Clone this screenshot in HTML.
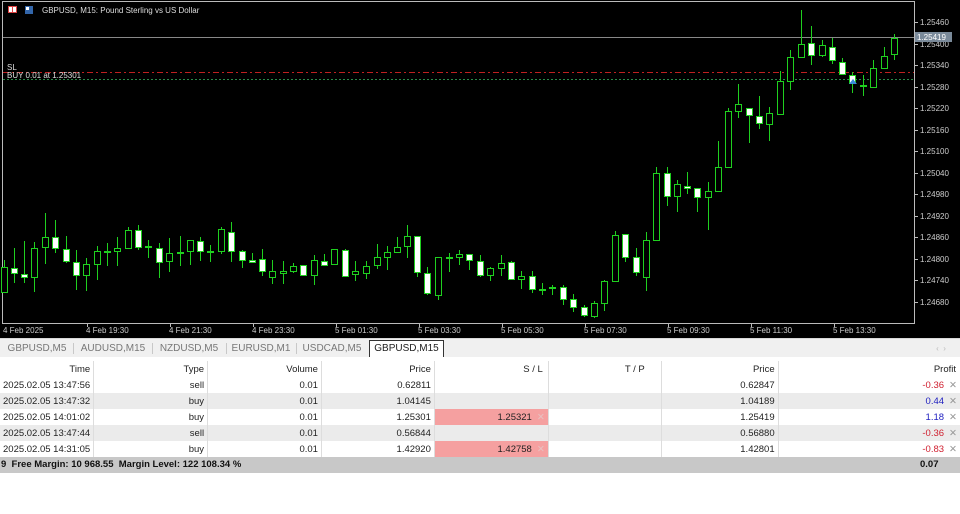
<!DOCTYPE html>
<html><head><meta charset="utf-8"><style>
*{margin:0;padding:0;box-sizing:border-box}
body{width:960px;height:514px;background:#fff;font-family:"Liberation Sans",sans-serif;overflow:hidden;position:relative}
#chart{position:absolute;left:0;top:0;width:960px;height:338px;background:#000}
svg text{font-family:"Liberation Sans",sans-serif}
.u{fill:#000;stroke:#1fd01f;stroke-width:1}
.d{fill:#fff;stroke:#1fd01f;stroke-width:1}
line.w{stroke:#1fd01f;stroke-width:1}
#tabs{position:absolute;left:0;top:338px;width:960px;height:19px;background:#f0f0f0;border-top:1px solid #d8d8d8;font-size:10px;color:#777}
.tab{position:absolute;top:3px;height:14px;line-height:14px;text-align:center}
.sep{position:absolute;top:4px;width:1px;height:11px;background:#c8c8c8}
.act{position:absolute;left:369px;top:1px;width:75px;height:17px;background:#fff;border:1px solid #333;border-bottom:none;color:#222;font-size:10px;line-height:15px;text-align:center}
table{position:absolute;left:0;top:361px;border-collapse:collapse;font-size:9.5px;color:#222}
td{height:16px;padding:0 3px;text-align:right;border-right:1px solid #ddd;white-space:nowrap}
tr.g td{background:#ebebeb}
.x{color:#999;padding-left:5px}
.red{color:#d02030}.blue{color:#2020c0}
.sl{background:#f5a0a0 !important}
#foot{position:absolute;left:0;top:457px;width:960px;height:16px;background:#c8c8c8;font-size:9.5px;font-weight:bold;color:#111;line-height:16px}
</style></head><body>
<div id="chart">
<svg width="960" height="338" xmlns="http://www.w3.org/2000/svg">
<rect x="2.5" y="1.5" width="912" height="322" fill="none" stroke="#bbb"/>
<line x1="3" y1="37.5" x2="914" y2="37.5" stroke="#888"/>
<line x1="3" y1="72.5" x2="914" y2="72.5" stroke="#c02020" stroke-dasharray="6,3,2,3"/>
<line x1="3" y1="79.5" x2="914" y2="79.5" stroke="#2a8a4a" stroke-dasharray="2,2"/>
<text x="7" y="70" fill="#ddd" font-size="8">SL</text>
<text x="7" y="78" fill="#ddd" font-size="8">BUY 0.01 at 1.25301</text>
<rect x="8" y="6" width="9" height="7" fill="#d44"/><rect x="9" y="7" width="3" height="5" fill="#fff"/><rect x="13" y="7" width="3" height="5" fill="#fff"/>
<rect x="25" y="6" width="8" height="8" fill="#36a"/><rect x="26" y="7" width="3" height="3" fill="#fff"/>
<text x="42" y="13" fill="#ddd" font-size="8">GBPUSD, M15:  Pound Sterling vs US Dollar</text>
<g>
<line class="w" x1="4.5" y1="260" x2="4.5" y2="292"/><rect class="u" x="1.5" y="267.5" width="6" height="25"/>
<line class="w" x1="14.5" y1="248" x2="14.5" y2="283"/><rect class="d" x="11.5" y="268.5" width="6" height="5"/>
<line class="w" x1="24.5" y1="241" x2="24.5" y2="283"/><rect class="d" x="21.5" y="274.5" width="6" height="3"/>
<line class="w" x1="34.5" y1="242" x2="34.5" y2="292"/><rect class="u" x="31.5" y="248.5" width="6" height="29"/>
<line class="w" x1="45.5" y1="213" x2="45.5" y2="264"/><rect class="u" x="42.5" y="237.5" width="6" height="10"/>
<line class="w" x1="55.5" y1="220" x2="55.5" y2="253"/><rect class="d" x="52.5" y="237.5" width="6" height="11"/>
<line class="w" x1="66.5" y1="236" x2="66.5" y2="263"/><rect class="d" x="63.5" y="249.5" width="6" height="12"/>
<line class="w" x1="76.5" y1="250" x2="76.5" y2="290"/><rect class="d" x="73.5" y="262.5" width="6" height="13"/>
<line class="w" x1="86.5" y1="258" x2="86.5" y2="291"/><rect class="u" x="83.5" y="264.5" width="6" height="11"/>
<line class="w" x1="97.5" y1="246" x2="97.5" y2="280"/><rect class="u" x="94.5" y="251.5" width="6" height="13"/>
<line class="w" x1="107.5" y1="243" x2="107.5" y2="266"/><rect class="u" x="104.5" y="251.5" width="6" height="1"/>
<line class="w" x1="117.5" y1="237" x2="117.5" y2="266"/><rect class="u" x="114.5" y="248.5" width="6" height="3"/>
<line class="w" x1="128.5" y1="227" x2="128.5" y2="249"/><rect class="u" x="125.5" y="230.5" width="6" height="18"/>
<line class="w" x1="138.5" y1="225" x2="138.5" y2="250"/><rect class="d" x="135.5" y="230.5" width="6" height="17"/>
<line class="w" x1="148.5" y1="240" x2="148.5" y2="258"/><rect class="d" x="145.5" y="246.5" width="6" height="1"/>
<line class="w" x1="159.5" y1="243" x2="159.5" y2="278"/><rect class="d" x="156.5" y="248.5" width="6" height="14"/>
<line class="w" x1="169.5" y1="238" x2="169.5" y2="272"/><rect class="u" x="166.5" y="253.5" width="6" height="8"/>
<line class="w" x1="180.5" y1="236" x2="180.5" y2="266"/><rect class="u" x="177.5" y="252.5" width="6" height="1"/>
<line class="w" x1="190.5" y1="240" x2="190.5" y2="265"/><rect class="u" x="187.5" y="240.5" width="6" height="11"/>
<line class="w" x1="200.5" y1="237" x2="200.5" y2="261"/><rect class="d" x="197.5" y="241.5" width="6" height="10"/>
<line class="w" x1="210.5" y1="245" x2="210.5" y2="262"/><rect class="d" x="207.5" y="251.5" width="6" height="1"/>
<line class="w" x1="221.5" y1="227" x2="221.5" y2="254"/><rect class="u" x="218.5" y="229.5" width="6" height="22"/>
<line class="w" x1="231.5" y1="222" x2="231.5" y2="262"/><rect class="d" x="228.5" y="232.5" width="6" height="19"/>
<line class="w" x1="242.5" y1="250" x2="242.5" y2="268"/><rect class="d" x="239.5" y="251.5" width="6" height="9"/>
<line class="w" x1="252.5" y1="253" x2="252.5" y2="262"/><rect class="d" x="249.5" y="260.5" width="6" height="2"/>
<line class="w" x1="262.5" y1="249" x2="262.5" y2="276"/><rect class="d" x="259.5" y="259.5" width="6" height="12"/>
<line class="w" x1="272.5" y1="260" x2="272.5" y2="284"/><rect class="u" x="269.5" y="271.5" width="6" height="6"/>
<line class="w" x1="283.5" y1="261" x2="283.5" y2="284"/><rect class="u" x="280.5" y="271.5" width="6" height="2"/>
<line class="w" x1="293.5" y1="263" x2="293.5" y2="273"/><rect class="u" x="290.5" y="266.5" width="6" height="5"/>
<line class="w" x1="303.5" y1="265" x2="303.5" y2="275"/><rect class="d" x="300.5" y="265.5" width="6" height="10"/>
<line class="w" x1="314.5" y1="255" x2="314.5" y2="285"/><rect class="u" x="311.5" y="260.5" width="6" height="15"/>
<line class="w" x1="324.5" y1="254" x2="324.5" y2="265"/><rect class="d" x="321.5" y="261.5" width="6" height="4"/>
<line class="w" x1="334.5" y1="249" x2="334.5" y2="264"/><rect class="u" x="331.5" y="249.5" width="6" height="15"/>
<line class="w" x1="345.5" y1="249" x2="345.5" y2="277"/><rect class="d" x="342.5" y="250.5" width="6" height="26"/>
<line class="w" x1="355.5" y1="261" x2="355.5" y2="281"/><rect class="u" x="352.5" y="271.5" width="6" height="3"/>
<line class="w" x1="366.5" y1="261" x2="366.5" y2="279"/><rect class="u" x="363.5" y="266.5" width="6" height="7"/>
<line class="w" x1="377.5" y1="244" x2="377.5" y2="269"/><rect class="u" x="374.5" y="257.5" width="6" height="8"/>
<line class="w" x1="387.5" y1="246" x2="387.5" y2="270"/><rect class="u" x="384.5" y="252.5" width="6" height="5"/>
<line class="w" x1="397.5" y1="237" x2="397.5" y2="253"/><rect class="u" x="394.5" y="247.5" width="6" height="5"/>
<line class="w" x1="407.5" y1="225" x2="407.5" y2="258"/><rect class="u" x="404.5" y="236.5" width="6" height="10"/>
<line class="w" x1="417.5" y1="236" x2="417.5" y2="277"/><rect class="d" x="414.5" y="236.5" width="6" height="36"/>
<line class="w" x1="427.5" y1="267" x2="427.5" y2="295"/><rect class="d" x="424.5" y="273.5" width="6" height="20"/>
<line class="w" x1="438.5" y1="257" x2="438.5" y2="300"/><rect class="u" x="435.5" y="257.5" width="6" height="38"/>
<line class="w" x1="449.5" y1="253" x2="449.5" y2="272"/><rect class="u" x="446.5" y="257.5" width="6" height="1"/>
<line class="w" x1="459.5" y1="250" x2="459.5" y2="265"/><rect class="u" x="456.5" y="254.5" width="6" height="3"/>
<line class="w" x1="469.5" y1="254" x2="469.5" y2="270"/><rect class="d" x="466.5" y="254.5" width="6" height="6"/>
<line class="w" x1="480.5" y1="255" x2="480.5" y2="277"/><rect class="d" x="477.5" y="261.5" width="6" height="14"/>
<line class="w" x1="490.5" y1="267" x2="490.5" y2="281"/><rect class="u" x="487.5" y="268.5" width="6" height="7"/>
<line class="w" x1="501.5" y1="255" x2="501.5" y2="276"/><rect class="u" x="498.5" y="263.5" width="6" height="5"/>
<line class="w" x1="511.5" y1="261" x2="511.5" y2="280"/><rect class="d" x="508.5" y="262.5" width="6" height="17"/>
<line class="w" x1="521.5" y1="271" x2="521.5" y2="289"/><rect class="u" x="518.5" y="276.5" width="6" height="3"/>
<line class="w" x1="532.5" y1="271" x2="532.5" y2="293"/><rect class="d" x="529.5" y="276.5" width="6" height="13"/>
<line class="w" x1="542.5" y1="283" x2="542.5" y2="295"/><rect class="d" x="539.5" y="289.5" width="6" height="1"/>
<line class="w" x1="552.5" y1="285" x2="552.5" y2="295"/><rect class="u" x="549.5" y="287.5" width="6" height="1"/>
<line class="w" x1="563.5" y1="285" x2="563.5" y2="305"/><rect class="d" x="560.5" y="287.5" width="6" height="12"/>
<line class="w" x1="573.5" y1="294" x2="573.5" y2="312"/><rect class="d" x="570.5" y="299.5" width="6" height="8"/>
<line class="w" x1="584.5" y1="305" x2="584.5" y2="317"/><rect class="d" x="581.5" y="307.5" width="6" height="8"/>
<line class="w" x1="594.5" y1="301" x2="594.5" y2="318"/><rect class="u" x="591.5" y="303.5" width="6" height="13"/>
<line class="w" x1="604.5" y1="280" x2="604.5" y2="311"/><rect class="u" x="601.5" y="281.5" width="6" height="22"/>
<line class="w" x1="615.5" y1="231" x2="615.5" y2="282"/><rect class="u" x="612.5" y="235.5" width="6" height="46"/>
<line class="w" x1="625.5" y1="234" x2="625.5" y2="262"/><rect class="d" x="622.5" y="234.5" width="6" height="23"/>
<line class="w" x1="636.5" y1="248" x2="636.5" y2="276"/><rect class="d" x="633.5" y="257.5" width="6" height="15"/>
<line class="w" x1="646.5" y1="232" x2="646.5" y2="291"/><rect class="u" x="643.5" y="240.5" width="6" height="37"/>
<line class="w" x1="656.5" y1="167" x2="656.5" y2="241"/><rect class="u" x="653.5" y="173.5" width="6" height="67"/>
<line class="w" x1="667.5" y1="167" x2="667.5" y2="206"/><rect class="d" x="664.5" y="173.5" width="6" height="23"/>
<line class="w" x1="677.5" y1="180" x2="677.5" y2="212"/><rect class="u" x="674.5" y="184.5" width="6" height="12"/>
<line class="w" x1="687.5" y1="172" x2="687.5" y2="194"/><rect class="d" x="684.5" y="186.5" width="6" height="2"/>
<line class="w" x1="697.5" y1="188" x2="697.5" y2="212"/><rect class="d" x="694.5" y="188.5" width="6" height="9"/>
<line class="w" x1="708.5" y1="182" x2="708.5" y2="230"/><rect class="u" x="705.5" y="191.5" width="6" height="6"/>
<line class="w" x1="718.5" y1="141" x2="718.5" y2="191"/><rect class="u" x="715.5" y="167.5" width="6" height="24"/>
<line class="w" x1="728.5" y1="108" x2="728.5" y2="168"/><rect class="u" x="725.5" y="111.5" width="6" height="56"/>
<line class="w" x1="738.5" y1="84" x2="738.5" y2="118"/><rect class="u" x="735.5" y="104.5" width="6" height="7"/>
<line class="w" x1="749.5" y1="108" x2="749.5" y2="143"/><rect class="d" x="746.5" y="108.5" width="6" height="7"/>
<line class="w" x1="759.5" y1="96" x2="759.5" y2="129"/><rect class="d" x="756.5" y="116.5" width="6" height="7"/>
<line class="w" x1="769.5" y1="107" x2="769.5" y2="141"/><rect class="u" x="766.5" y="113.5" width="6" height="11"/>
<line class="w" x1="780.5" y1="71" x2="780.5" y2="114"/><rect class="u" x="777.5" y="81.5" width="6" height="33"/>
<line class="w" x1="790.5" y1="50" x2="790.5" y2="90"/><rect class="u" x="787.5" y="57.5" width="6" height="24"/>
<line class="w" x1="801.5" y1="10" x2="801.5" y2="58"/><rect class="u" x="798.5" y="44.5" width="6" height="13"/>
<line class="w" x1="811.5" y1="26" x2="811.5" y2="65"/><rect class="d" x="808.5" y="43.5" width="6" height="12"/>
<line class="w" x1="822.5" y1="40" x2="822.5" y2="57"/><rect class="u" x="819.5" y="45.5" width="6" height="10"/>
<line class="w" x1="832.5" y1="38" x2="832.5" y2="64"/><rect class="d" x="829.5" y="47.5" width="6" height="13"/>
<line class="w" x1="842.5" y1="58" x2="842.5" y2="75"/><rect class="d" x="839.5" y="62.5" width="6" height="12"/>
<line class="w" x1="852.5" y1="72" x2="852.5" y2="93"/><rect class="d" x="849.5" y="75.5" width="6" height="8"/>
<line class="w" x1="863.5" y1="75" x2="863.5" y2="96"/><rect class="u" x="860.5" y="85.5" width="6" height="1"/>
<line class="w" x1="873.5" y1="60" x2="873.5" y2="88"/><rect class="u" x="870.5" y="68.5" width="6" height="19"/>
<line class="w" x1="884.5" y1="47" x2="884.5" y2="69"/><rect class="u" x="881.5" y="56.5" width="6" height="12"/>
<line class="w" x1="894.5" y1="34" x2="894.5" y2="60"/><rect class="u" x="891.5" y="38.5" width="6" height="16"/>
</g>
<path d="M849 84 L853 79 L857 84 Z" fill="#3a8ad8"/>
<g stroke="#bbb">
<line x1="915" y1="22.5" x2="918" y2="22.5"/><line x1="915" y1="44.5" x2="918" y2="44.5"/><line x1="915" y1="65.5" x2="918" y2="65.5"/><line x1="915" y1="87.5" x2="918" y2="87.5"/><line x1="915" y1="108.5" x2="918" y2="108.5"/><line x1="915" y1="130.5" x2="918" y2="130.5"/><line x1="915" y1="151.5" x2="918" y2="151.5"/><line x1="915" y1="173.5" x2="918" y2="173.5"/><line x1="915" y1="194.5" x2="918" y2="194.5"/><line x1="915" y1="216.5" x2="918" y2="216.5"/><line x1="915" y1="237.5" x2="918" y2="237.5"/><line x1="915" y1="259.5" x2="918" y2="259.5"/><line x1="915" y1="280.5" x2="918" y2="280.5"/><line x1="915" y1="302.5" x2="918" y2="302.5"/>
</g>
<g fill="#ccc" font-size="8">
<text x="920" y="25">1.25460</text><text x="920" y="47">1.25400</text><text x="920" y="68">1.25340</text><text x="920" y="90">1.25280</text><text x="920" y="111">1.25220</text><text x="920" y="133">1.25160</text><text x="920" y="154">1.25100</text><text x="920" y="176">1.25040</text><text x="920" y="197">1.24980</text><text x="920" y="219">1.24920</text><text x="920" y="240">1.24860</text><text x="920" y="262">1.24800</text><text x="920" y="283">1.24740</text><text x="920" y="305">1.24680</text>
</g>
<rect x="915" y="32" width="37" height="10" fill="#7a8a9a"/>
<text x="917" y="40" fill="#fff" font-size="8">1.25419</text>
<g stroke="#bbb">
<line x1="87.5" y1="323" x2="87.5" y2="327"/><line x1="170.5" y1="323" x2="170.5" y2="327"/><line x1="253.5" y1="323" x2="253.5" y2="327"/><line x1="336.5" y1="323" x2="336.5" y2="327"/><line x1="419.5" y1="323" x2="419.5" y2="327"/><line x1="502.5" y1="323" x2="502.5" y2="327"/><line x1="585.5" y1="323" x2="585.5" y2="327"/><line x1="668.5" y1="323" x2="668.5" y2="327"/><line x1="751.5" y1="323" x2="751.5" y2="327"/><line x1="834.5" y1="323" x2="834.5" y2="327"/>
</g>
<g fill="#ccc" font-size="8">
<text x="3" y="333">4 Feb 2025</text><text x="86" y="333">4 Feb 19:30</text><text x="169" y="333">4 Feb 21:30</text><text x="252" y="333">4 Feb 23:30</text><text x="335" y="333">5 Feb 01:30</text><text x="418" y="333">5 Feb 03:30</text><text x="501" y="333">5 Feb 05:30</text><text x="584" y="333">5 Feb 07:30</text><text x="667" y="333">5 Feb 09:30</text><text x="750" y="333">5 Feb 11:30</text><text x="833" y="333">5 Feb 13:30</text>
</g>
</svg>
</div>
<div id="tabs">
<div class="tab" style="left:3px;width:68px">GBPUSD,M5</div><div class="sep" style="left:73px"></div>
<div class="tab" style="left:75px;width:76px">AUDUSD,M15</div><div class="sep" style="left:152px"></div>
<div class="tab" style="left:154px;width:70px">NZDUSD,M5</div><div class="sep" style="left:226px"></div>
<div class="tab" style="left:228px;width:66px">EURUSD,M1</div><div class="sep" style="left:296px"></div>
<div class="tab" style="left:298px;width:68px">USDCAD,M5</div>
<div class="act">GBPUSD,M15</div>
<div class="tab" style="left:926px;width:30px;color:#bbb;font-size:8px">‹&nbsp;&nbsp;›</div>
</div>
<table>
<tr><td style="width:93px">Time</td><td style="width:114px">Type</td><td style="width:114px">Volume</td><td style="width:113px">Price</td><td style="width:114px;padding-right:5px">S / L</td><td style="width:113px;padding-right:16px">T / P</td><td style="width:117px">Price</td><td style="width:182px;border-right:none;padding-right:4px">Profit</td></tr>
<tr><td>2025.02.05 13:47:56</td><td>sell</td><td>0.01</td><td>0.62811</td><td></td><td></td><td>0.62847</td><td style="border-right:none"><span class="red">-0.36</span><span class="x">✕</span></td></tr>
<tr class="g"><td>2025.02.05 13:47:32</td><td>buy</td><td>0.01</td><td>1.04145</td><td></td><td></td><td>1.04189</td><td style="border-right:none"><span class="blue">0.44</span><span class="x">✕</span></td></tr>
<tr><td>2025.02.05 14:01:02</td><td>buy</td><td>0.01</td><td>1.25301</td><td class="sl">1.25321<span class="x" style="color:#e8c0c0">✕</span></td><td></td><td>1.25419</td><td style="border-right:none"><span class="blue">1.18</span><span class="x">✕</span></td></tr>
<tr class="g"><td>2025.02.05 13:47:44</td><td>sell</td><td>0.01</td><td>0.56844</td><td></td><td></td><td>0.56880</td><td style="border-right:none"><span class="red">-0.36</span><span class="x">✕</span></td></tr>
<tr><td>2025.02.05 14:31:05</td><td>buy</td><td>0.01</td><td>1.42920</td><td class="sl">1.42758<span class="x" style="color:#e8c0c0">✕</span></td><td></td><td>1.42801</td><td style="border-right:none"><span class="red">-0.83</span><span class="x">✕</span></td></tr>
</table>
<div id="foot"><span style="position:absolute;left:1px">9&nbsp; Free Margin: 10 968.55&nbsp; Margin Level: 122 108.34 %</span><span style="position:absolute;left:920px">0.07</span></div>
</body></html>
